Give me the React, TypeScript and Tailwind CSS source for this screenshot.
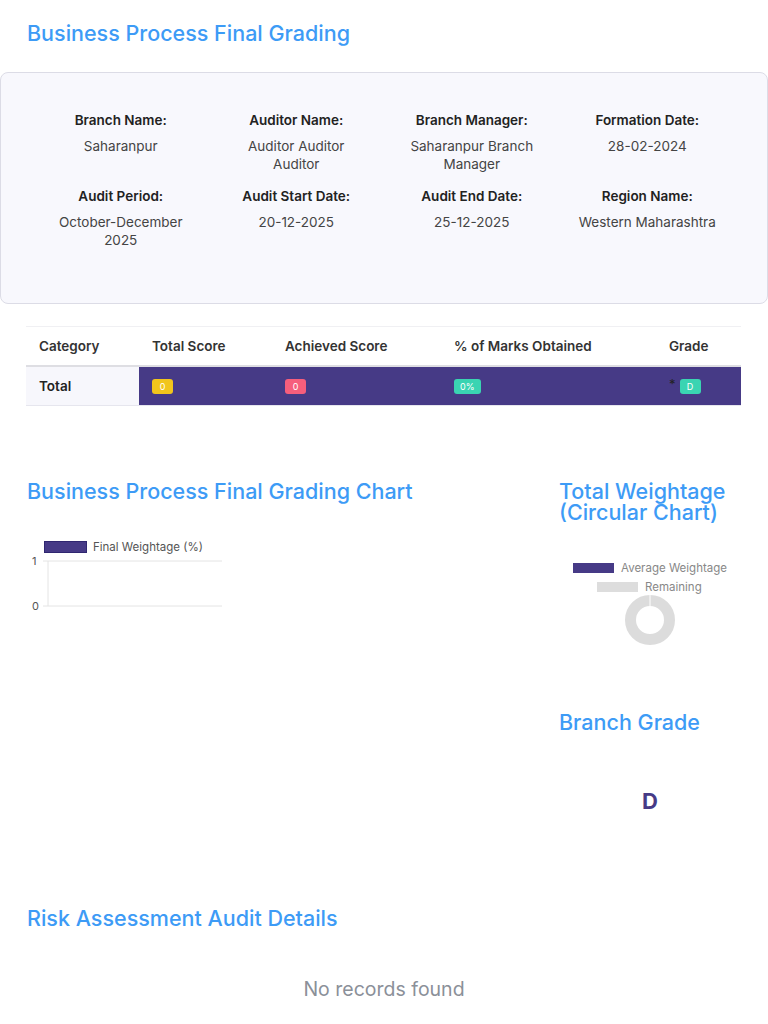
import React from "react";

const heading = "font-['Inter',sans-serif] text-[21.5px] leading-[21px] font-medium text-[#3d9bf6]";

const info: { label: string; value: string }[] = [
  { label: "Branch Name:", value: "Saharanpur" },
  { label: "Auditor Name:", value: "Auditor Auditor Auditor" },
  { label: "Branch Manager:", value: "Saharanpur Branch Manager" },
  { label: "Formation Date:", value: "28-02-2024" },
  { label: "Audit Period:", value: "October-December 2025" },
  { label: "Audit Start Date:", value: "20-12-2025" },
  { label: "Audit End Date:", value: "25-12-2025" },
  { label: "Region Name:", value: "Western Maharashtra" },
];

function Badge({ color, children }: { color: string; children: React.ReactNode }) {
  return (
    <span
      className={`inline-flex items-center justify-center h-[15px] min-w-[21px] px-[6px] rounded-[3px] text-[9px] leading-none text-white ${color}`}
    >
      {children}
    </span>
  );
}

export default function App() {
  return (
    <div className="w-[768px] min-h-[1024px] bg-white font-['Inter',sans-serif] text-[#333]">
      <h1 className={`${heading} pt-[23px] px-[27px]`}>Business Process Final Grading</h1>

      <div className="mt-[28px] h-[232px] border border-[#dcdce6] rounded-[8px] bg-[#f8f8fd] px-[32px] pt-[38px]">
        <div className="grid grid-cols-4 gap-y-[14px]">
          {info.map((it) => (
            <div key={it.label} className="flex flex-col items-center text-center px-[8px]">
              <div className="text-[13.5px] leading-[18px] font-semibold text-[#222]">{it.label}</div>
              <div className="mt-[8px] text-[13.5px] leading-[18px] text-[#444] max-w-[142px]">{it.value}</div>
            </div>
          ))}
        </div>
      </div>

      <div className="mt-[22px] ml-[26px] w-[715px] border-t border-[#f0f0f3]">
        <div className="grid grid-cols-[113px_133px_169px_215px_85px] h-[40px] items-center border-b-2 border-[#dedee3] text-[13.5px] font-semibold text-[#333]">
          <div className="pl-[13px]">Category</div>
          <div className="pl-[13px]">Total Score</div>
          <div className="pl-[13px]">Achieved Score</div>
          <div className="pl-[13px]">% of Marks Obtained</div>
          <div className="pl-[13px]">Grade</div>
        </div>
        <div className="grid grid-cols-[113px_133px_169px_215px_85px] h-[39px] items-stretch text-[13.5px] border-b border-[#e6e6ee]">
          <div className="pl-[13px] flex items-center font-semibold text-[#222] bg-[#f7f7fc]">Total</div>
          <div className="pl-[13px] flex items-center bg-[#463a86]">
            <Badge color="bg-[#f1c51c]">0</Badge>
          </div>
          <div className="pl-[13px] flex items-center bg-[#463a86]">
            <Badge color="bg-[#f65e7c]">0</Badge>
          </div>
          <div className="pl-[13px] flex items-center bg-[#463a86]">
            <Badge color="bg-[#3ad4b2]">0%</Badge>
          </div>
          <div className="pl-[13px] flex items-center gap-[4px] bg-[#463a86]">
            <span className="text-[#222] text-[13px] leading-none -mt-[4px]">*</span>
            <Badge color="bg-[#3ad4b2]">D</Badge>
          </div>
        </div>
      </div>

      <div className="mt-[75px] px-[27px] grid grid-cols-[1fr_182px] gap-[18px]">
        <div>
          <h2 className={heading}>Business Process Final Grading Chart</h2>
          <svg width="210" height="82" className="mt-[33px] block font-['Inter',sans-serif]">
            <rect x="17.5" y="6.5" width="42" height="11" fill="#463a86" stroke="#2f2670" strokeWidth="1" />
            <text x="66" y="15.5" fontSize="11.5" fill="#555">Final Weightage (%)</text>
            <text x="5" y="30" fontSize="11" fill="#555">1</text>
            <text x="5" y="75" fontSize="11" fill="#555">0</text>
            <line x1="16" y1="26" x2="195" y2="26" stroke="#e4e4e4" strokeWidth="1" />
            <line x1="16" y1="71" x2="195" y2="71" stroke="#e4e4e4" strokeWidth="1" />
            <line x1="21" y1="26" x2="21" y2="71" stroke="#e4e4e4" strokeWidth="1" />
          </svg>
        </div>
        <div>
          <h2 className={heading}>Total Weightage (Circular Chart)</h2>
          <svg width="182" height="90" className="mt-[32px] block font-['Inter',sans-serif]">
            <rect x="14" y="8" width="41" height="10" fill="#463a86" />
            <text x="62" y="16.5" fontSize="11.5" fill="#888">Average Weightage</text>
            <rect x="38" y="27" width="41" height="10" fill="#dddddd" />
            <text x="86" y="36" fontSize="11.5" fill="#888">Remaining</text>
            <circle cx="91" cy="65" r="19.5" fill="none" stroke="#dcdcdc" strokeWidth="11" />
            <line x1="91" y1="40" x2="91" y2="51" stroke="#ffffff" strokeWidth="1" />
          </svg>
          <h2 className={`${heading} mt-[67px]`}>Branch Grade</h2>
          <div className="mt-[54px] text-center font-['Inter',sans-serif] text-[22px] leading-[28px] font-bold text-[#463a86]">
            D
          </div>
        </div>
      </div>

      <h2 className={`${heading} mt-[93px] px-[27px]`}>Risk Assessment Audit Details</h2>
      <div className="mt-[48px] text-center font-['Inter',sans-serif] text-[19.5px] leading-[24px] text-[#8b9099]">
        No records found
      </div>
    </div>
  );
}
